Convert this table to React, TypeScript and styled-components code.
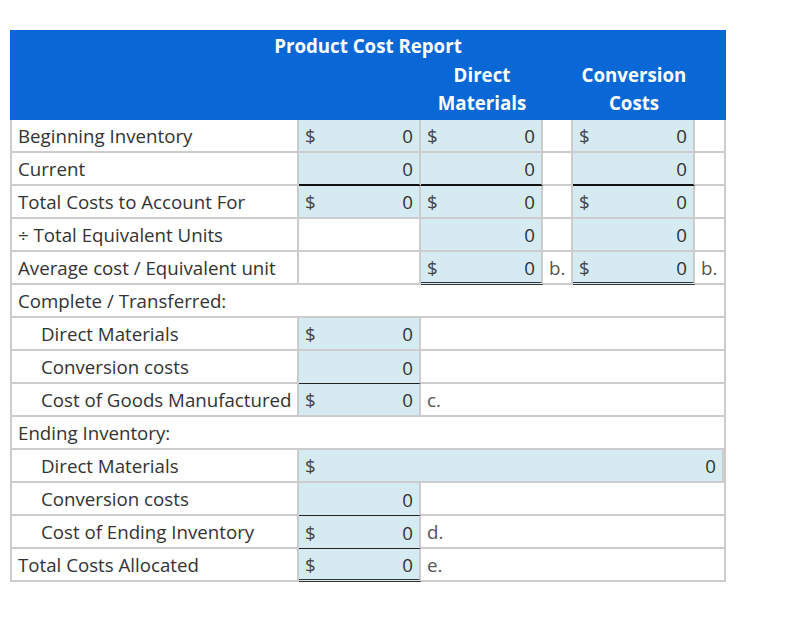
import React from "react";
import styled, { createGlobalStyle } from "styled-components";

const GlobalStyle = createGlobalStyle`
  body {
    margin: 0;
    background: #ffffff;
    font-family: "Open Sans", "Liberation Sans", sans-serif;
    color: #333333;
  }
`;

const COLS = "287px 122px 122px 30px 122px 29px";

type Under = "none" | "single" | "thick" | "double";

interface CellProps {
  $fill?: boolean;
  $span?: number;
  $under?: Under;
  $indent?: boolean;
  $last?: boolean;
}

const Page = styled.div`
  padding: 30px 0 0 10px;
`;

const Table = styled.div`
  width: 716px;
  border-left: 2px solid #cccccc;
  border-right: 2px solid #cccccc;
  box-sizing: border-box;
`;

const Header = styled.div`
  background: #0a68d6;
  color: #ffffff;
  font-weight: 700;
  font-size: 18.7px;
  height: 90px;
  padding: 2px 2px 0;
  box-sizing: border-box;
  margin: 0 -2px;
`;

const Title = styled.div`
  text-align: center;
  line-height: 28px;
  margin-bottom: 1px;
`;

const HeadRow = styled.div`
  display: grid;
  grid-template-columns: ${COLS};
  line-height: 28px;
`;

const HeadCell = styled.div<{ $col: number }>`
  grid-column: ${(p) => p.$col};
  text-align: center;
`;

const Row = styled.div`
  display: grid;
  grid-template-columns: ${COLS};
  height: 33px;
`;

const underline = (u?: Under) => {
  switch (u) {
    case "thick":
      return "2px solid #111111";
    case "single":
      return "1px solid #222222";
    case "double":
      return "3px double #333333";
    default:
      return "2px solid #cccccc";
  }
};

const Cell = styled.div<CellProps>`
  grid-column: span ${(p) => p.$span ?? 1};
  box-sizing: border-box;
  display: flex;
  align-items: center;
  justify-content: space-between;
  padding: 0 6px 0 ${(p) => (p.$indent ? "29px" : "6px")};
  background: ${(p) => (p.$fill ? "#d5eaf1" : "#ffffff")};
  border-right: ${(p) => (p.$last ? "none" : "2px solid #cccccc")};
  border-bottom: ${(p) => underline(p.$under)};
  font-size: 18.7px;
  white-space: nowrap;
`;

const Dollar = styled.span`
  color: #444444;
`;

const Note = styled.span`
  color: #555555;
`;

type Val = { d?: boolean; v?: string; u?: Under } | null;

const Amount = ({ val, span }: { val: Val; span?: number }) =>
  val ? (
    <Cell $fill $under={val.u} $span={span}>
      <Dollar>{val.d ? "$" : ""}</Dollar>
      <span>{val.v ?? ""}</span>
    </Cell>
  ) : (
    <Cell $span={span} />
  );

const ThreeCol = ({
  label,
  a,
  b,
  c,
  notes,
}: {
  label: string;
  a: Val;
  b: Val;
  c: Val;
  notes?: string;
}) => (
  <Row>
    <Cell>{label}</Cell>
    <Amount val={a} />
    <Amount val={b} />
    <Cell>{notes && <Note>{notes}</Note>}</Cell>
    <Amount val={c} />
    <Cell $last>{notes && <Note>{notes}</Note>}</Cell>
  </Row>
);

const SectionRow = ({ label }: { label: string }) => (
  <Row>
    <Cell $span={6} $last>
      {label}
    </Cell>
  </Row>
);

const SubRow = ({
  label,
  indent,
  val,
  note,
}: {
  label: string;
  indent?: boolean;
  val: Val;
  note?: string;
}) => (
  <Row>
    <Cell $indent={indent}>{label}</Cell>
    <Amount val={val} />
    <Cell $span={4} $last>
      {note && <Note>{note}</Note>}
    </Cell>
  </Row>
);

export default function App() {
  return (
    <Page>
      <GlobalStyle />
      <Table>
        <Header>
          <Title>Product Cost Report</Title>
          <HeadRow>
            <HeadCell $col={3}>Direct</HeadCell>
            <HeadCell $col={5}>Conversion</HeadCell>
          </HeadRow>
          <HeadRow>
            <HeadCell $col={3}>Materials</HeadCell>
            <HeadCell $col={5}>Costs</HeadCell>
          </HeadRow>
        </Header>

        <ThreeCol
          label="Beginning Inventory"
          a={{ d: true, v: "0" }}
          b={{ d: true, v: "0" }}
          c={{ d: true, v: "0" }}
        />
        <ThreeCol
          label="Current"
          a={{ v: "0", u: "thick" }}
          b={{ v: "0", u: "thick" }}
          c={{ v: "0", u: "thick" }}
        />
        <ThreeCol
          label="Total Costs to Account For"
          a={{ d: true, v: "0" }}
          b={{ d: true, v: "0" }}
          c={{ d: true, v: "0" }}
        />
        <ThreeCol
          label="÷ Total Equivalent Units"
          a={null}
          b={{ v: "0" }}
          c={{ v: "0" }}
        />
        <ThreeCol
          label="Average cost / Equivalent unit"
          a={null}
          b={{ d: true, v: "0", u: "double" }}
          c={{ d: true, v: "0", u: "double" }}
          notes="b."
        />

        <SectionRow label="Complete / Transferred:" />
        <SubRow indent label="Direct Materials" val={{ d: true, v: "0" }} />
        <SubRow indent label="Conversion costs" val={{ v: "0", u: "single" }} />
        <SubRow
          indent
          label="Cost of Goods Manufactured"
          val={{ d: true, v: "0" }}
          note="c."
        />

        <SectionRow label="Ending Inventory:" />
        <Row>
          <Cell $indent>Direct Materials</Cell>
          <Amount val={{ d: true, v: "0" }} span={5} />
        </Row>
        <SubRow indent label="Conversion costs" val={{ v: "0", u: "single" }} />
        <SubRow
          indent
          label="Cost of Ending Inventory"
          val={{ d: true, v: "0", u: "single" }}
          note="d."
        />
        <SubRow
          label="Total Costs Allocated"
          val={{ d: true, v: "0", u: "double" }}
          note="e."
        />
      </Table>
    </Page>
  );
}
